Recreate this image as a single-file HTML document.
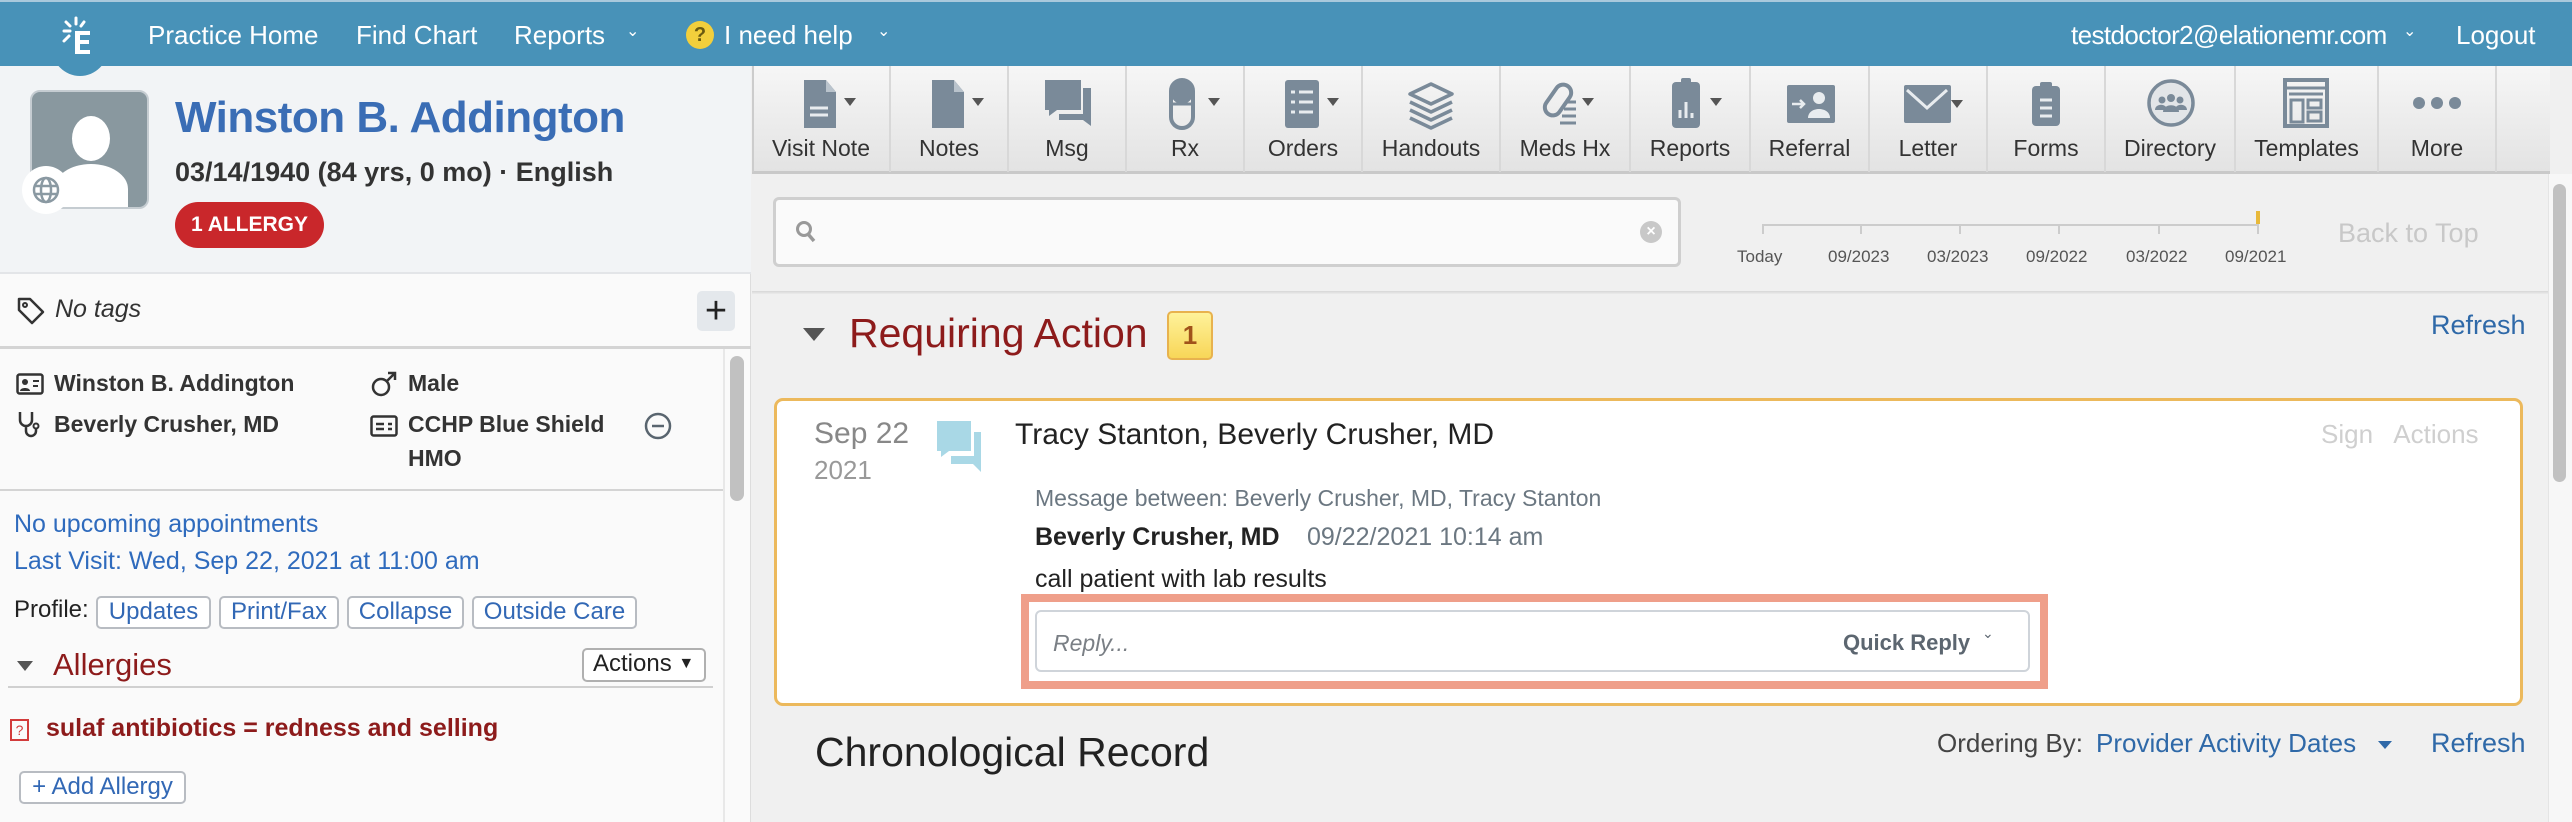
<!DOCTYPE html>
<html><head><meta charset="utf-8"><style>
*{box-sizing:border-box;margin:0;padding:0}
body{width:2572px;height:822px;overflow:hidden;position:relative;background:#f0f0f0;font-family:"Liberation Sans",Arial,sans-serif;color:#333}
.a{position:absolute;white-space:nowrap;line-height:1}
.nav{position:absolute;left:0;top:0;width:2572px;height:66px;background:#4892b8;border-top:2px solid #a9c9dc}
.nav .a{color:#fff;font-size:26px;top:20px}
.left{position:absolute;left:0;top:66px;width:751px;height:756px;background:#fafafa;border-right:1px solid #ddd}
.hdr{position:absolute;left:0;top:66px;width:751px;height:208px;background:#f2f4f6;border-bottom:2px solid #e3e5e8}
.btn{position:absolute;border:2px solid #b8bcc2;border-radius:5px;background:#fff;color:#3268b5;font-size:24px;line-height:28px;text-align:center}
.tb{position:absolute;left:752px;top:66px;width:1798px;height:108px;background:linear-gradient(#f6f6f6,#e3e3e3);border-bottom:3px solid #c9c9c9}
.sep{position:absolute;top:66px;width:2px;height:106px;background:#d8d8d8}
.lbl{position:absolute;top:137px;font-size:23px;color:#333;text-align:center;line-height:1}
.ic{position:absolute;top:78px}
.blue{color:#2f69a8}
</style></head><body>

<div class="nav">
  <div class="a" style="left:148px">Practice Home</div>
  <div class="a" style="left:356px">Find Chart</div>
  <div class="a" style="left:514px">Reports</div>
  <div class="a" style="left:626px;font-size:16px;top:22px">&#8964;</div>
  <div class="a" style="left:686px;top:19px;width:28px;height:28px;border-radius:50%;background:#f2cf3c;color:#6a5a10;font-size:20px;font-weight:bold;text-align:center;line-height:28px">?</div>
  <div class="a" style="left:724px">I need help</div>
  <div class="a" style="left:877px;font-size:16px;top:22px">&#8964;</div>
  <div class="a" style="left:2071px;letter-spacing:-0.6px">testdoctor2@elationemr.com</div>
  <div class="a" style="left:2403px;font-size:16px;top:22px">&#8964;</div>
  <div class="a" style="left:2456px">Logout</div>
</div>

<div class="left"></div>
<div class="hdr"></div>
<!-- logo bump -->
<div style="position:absolute;left:52px;top:30px;width:56px;height:46px;border-radius:0 0 28px 28px;background:#4892b8"></div>
<svg class="a" style="left:60px;top:16px" width="40" height="44" viewBox="0 0 40 44"><g stroke="#fff" stroke-width="3" stroke-linecap="round"><line x1="16" y1="2" x2="16" y2="8"/><line x1="6" y1="6" x2="10" y2="10"/><line x1="24" y1="6" x2="21" y2="10"/><line x1="4" y1="15" x2="10" y2="15"/><line x1="4" y1="25" x2="9" y2="20"/></g><path d="M15 15h15v4H20v5h9v4h-9v6h10v4H15z" fill="#fff"/></svg>

<!-- avatar -->
<div class="a" style="left:30px;top:90px;width:119px;height:119px;border-radius:10px;background:#89989f;border:2px solid #c5ccd1;overflow:hidden">
  <div style="position:absolute;left:40px;top:24px;width:38px;height:45px;border-radius:50%;background:#fff"></div>
  <div style="position:absolute;left:22px;top:72px;width:74px;height:50px;border-radius:50% 50% 0 0;background:#fff"></div>
</div>
<div class="a" style="left:22px;top:166px;width:48px;height:48px;border-radius:50%;background:#fff"></div>
<svg class="a" style="left:32px;top:176px" width="28" height="28" viewBox="0 0 28 28"><g fill="none" stroke="#8a99a2" stroke-width="2.5"><circle cx="14" cy="14" r="12"/><ellipse cx="14" cy="14" rx="5" ry="12"/><line x1="2" y1="10" x2="26" y2="10"/><line x1="2" y1="18" x2="26" y2="18"/></g></svg>

<div class="a" style="left:175px;top:96px;font-size:44px;font-weight:bold;color:#3a6db5;letter-spacing:-0.5px">Winston B. Addington</div>
<div class="a" style="left:175px;top:159px;font-size:27px;font-weight:bold;color:#333">03/14/1940 (84 yrs, 0 mo) · English</div>
<div class="a" style="left:175px;top:202px;width:149px;height:46px;border-radius:23px;background:#c9272b;color:#fff;font-weight:bold;font-size:21px;line-height:46px;text-align:center">1 ALLERGY</div>

<!-- tags -->
<svg class="a" style="left:16px;top:296px" width="30" height="30" viewBox="0 0 30 30"><path d="M3 3h11l13 13-11 11L3 14z" fill="none" stroke="#333" stroke-width="2.5" stroke-linejoin="round"/><circle cx="9" cy="9" r="2" fill="none" stroke="#333" stroke-width="2"/></svg>
<div class="a" style="left:55px;top:297px;font-size:25px;font-style:italic;color:#333">No tags</div>
<div class="a" style="left:697px;top:291px;width:38px;height:40px;border-radius:5px;background:#e4e8ec;text-align:center;font-size:38px;line-height:40px;color:#222">+</div>
<div class="a" style="left:0;top:346px;width:751px;height:3px;background:#d4d4d4"></div>
<div class="a" style="left:723px;top:349px;width:2px;height:473px;background:#e8e8e8"></div>
<div class="a" style="left:730px;top:356px;width:14px;height:145px;border-radius:7px;background:#c1c1c1"></div>

<!-- demographics -->
<svg class="a" style="left:16px;top:373px" width="28" height="22" viewBox="0 0 28 22"><rect x="1.5" y="1.5" width="25" height="19" rx="2" fill="none" stroke="#333" stroke-width="2.5"/><circle cx="9" cy="9" r="3" fill="#333"/><path d="M4 18c0-4 10-4 10 0z" fill="#333"/><path d="M17 8h6M17 13h5" stroke="#333" stroke-width="2"/></svg>
<div class="a" style="left:54px;top:372px;font-size:23px;font-weight:bold;color:#333">Winston B. Addington</div>
<svg class="a" style="left:370px;top:370px" width="28" height="28" viewBox="0 0 28 28"><circle cx="11" cy="17" r="8" fill="none" stroke="#333" stroke-width="2.5"/><path d="M17 11l8-8M18 3h7v7" fill="none" stroke="#333" stroke-width="2.5"/></svg>
<div class="a" style="left:408px;top:372px;font-size:23px;font-weight:bold;color:#333">Male</div>
<svg class="a" style="left:17px;top:410px" width="26" height="30" viewBox="0 0 26 30"><path d="M3 2v8a6 6 0 0 0 12 0V2M9 16v5a5 5 0 0 0 10 0v-3" fill="none" stroke="#333" stroke-width="2.5"/><circle cx="19" cy="16" r="2.5" fill="none" stroke="#333" stroke-width="2"/></svg>
<div class="a" style="left:54px;top:413px;font-size:23px;font-weight:bold;color:#333">Beverly Crusher, MD</div>
<svg class="a" style="left:370px;top:415px" width="28" height="22" viewBox="0 0 28 22"><rect x="1.5" y="1.5" width="25" height="19" rx="2" fill="none" stroke="#333" stroke-width="2.5"/><path d="M6 9h8M6 14h8M18 9h4M18 14h4" stroke="#333" stroke-width="2.5"/></svg>
<div class="a" style="left:408px;top:413px;font-size:23px;font-weight:bold;color:#333">CCHP Blue Shield</div>
<div class="a" style="left:408px;top:447px;font-size:23px;font-weight:bold;color:#333">HMO</div>
<svg class="a" style="left:644px;top:412px" width="28" height="28" viewBox="0 0 28 28"><circle cx="14" cy="14" r="12" fill="none" stroke="#59656f" stroke-width="2.5"/><line x1="8" y1="14" x2="20" y2="14" stroke="#59656f" stroke-width="2.5"/></svg>
<div class="a" style="left:0;top:489px;width:723px;height:2px;background:#d4d4d4"></div>

<div class="a" style="left:14px;top:512px;font-size:25px;color:#2f6bbd">No upcoming appointments</div>
<div class="a" style="left:14px;top:549px;font-size:25px;color:#2f6bbd">Last Visit: Wed, Sep 22, 2021 at 11:00 am</div>
<div class="a" style="left:14px;top:598px;font-size:24px;color:#222">Profile:</div>
<div class="btn" style="left:96px;top:596px;width:115px;height:33px">Updates</div>
<div class="btn" style="left:219px;top:596px;width:120px;height:33px">Print/Fax</div>
<div class="btn" style="left:347px;top:596px;width:117px;height:33px">Collapse</div>
<div class="btn" style="left:472px;top:596px;width:165px;height:33px">Outside Care</div>

<div class="a" style="left:17px;top:661px;width:0;height:0;border-left:8px solid transparent;border-right:8px solid transparent;border-top:10px solid #555"></div>
<div class="a" style="left:53px;top:649px;font-size:31px;color:#8d1b1b">Allergies</div>
<div class="btn" style="left:582px;top:648px;width:124px;height:34px;color:#222;border-color:#b0b0b0;text-align:left;padding-left:9px">Actions <span style="font-size:16px;vertical-align:3px">&#9660;</span></div>
<div class="a" style="left:8px;top:686px;width:705px;height:2px;background:#d0d0d0"></div>
<div class="a" style="left:10px;top:719px;width:19px;height:22px;border:2px solid #d23b3b;color:#d23b3b;font-size:14px;text-align:center;line-height:18px">?</div>
<div class="a" style="left:46px;top:716px;font-size:25px;color:#8d1b1b;font-weight:bold">sulaf antibiotics = redness and selling</div>
<div class="btn" style="left:19px;top:771px;width:167px;height:33px">+ Add Allergy</div>

<!-- toolbar -->
<div class="tb"></div>
<div class="sep" style="left:752px;background:#ccc"></div>
<div class="sep" style="left:889px"></div><div class="sep" style="left:1007px"></div><div class="sep" style="left:1125px"></div><div class="sep" style="left:1243px"></div><div class="sep" style="left:1361px"></div><div class="sep" style="left:1499px"></div><div class="sep" style="left:1629px"></div><div class="sep" style="left:1749px"></div><div class="sep" style="left:1868px"></div><div class="sep" style="left:1986px"></div><div class="sep" style="left:2104px"></div><div class="sep" style="left:2234px"></div><div class="sep" style="left:2377px"></div><div class="sep" style="left:2495px"></div>

<!-- icons -->
<svg class="ic" style="left:800px" width="60" height="52" viewBox="0 0 60 52"><path d="M4 2h22l10 12v36H4z" fill="#7a8a99"/><path d="M26 2v12h10" fill="#b9c3cc"/><path d="M10 30h18M10 37h18" stroke="#e8ecef" stroke-width="3"/><path d="M44 20h12l-6 8z" fill="#555"/></svg>
<div class="lbl" style="left:752px;width:138px">Visit Note</div>
<svg class="ic" style="left:928px" width="60" height="52" viewBox="0 0 60 52"><path d="M4 2h22l10 12v36H4z" fill="#7a8a99"/><path d="M26 2v12h10" fill="#b9c3cc"/><path d="M44 20h12l-6 8z" fill="#555"/></svg>
<div class="lbl" style="left:890px;width:118px">Notes</div>
<svg class="ic" style="left:1043px" width="50" height="52" viewBox="0 0 50 52"><path d="M2 2h36v30H14l-8 6v-6H2z" fill="#7a8a99"/><path d="M40 10h8v38l-8-6H16v-6h24z" fill="#7a8a99"/></svg>
<div class="lbl" style="left:1008px;width:118px">Msg</div>
<svg class="ic" style="left:1168px" width="60" height="52" viewBox="0 0 60 52"><rect x="3" y="2" width="22" height="48" rx="11" fill="none" stroke="#7a8a99" stroke-width="4"/><path d="M3 26h22" stroke="#7a8a99" stroke-width="3"/><rect x="3" y="2" width="22" height="24" rx="11" fill="#7a8a99"/><path d="M40 20h12l-6 8z" fill="#555"/></svg>
<div class="lbl" style="left:1126px;width:118px">Rx</div>
<svg class="ic" style="left:1283px" width="62" height="52" viewBox="0 0 62 52"><rect x="2" y="2" width="34" height="48" rx="3" fill="#7a8a99"/><path d="M8 14h4M16 14h14M8 24h4M16 24h14M8 34h4M16 34h14" stroke="#e8ecef" stroke-width="3"/><path d="M44 20h12l-6 8z" fill="#555"/></svg>
<div class="lbl" style="left:1244px;width:118px">Orders</div>
<svg class="ic" style="left:1406px" width="50" height="52" viewBox="0 0 50 52"><g fill="none" stroke="#7a8a99" stroke-width="3.5" stroke-linejoin="round"><path d="M4 16L25 6l21 10-21 10z"/><path d="M4 24l21 10 21-10"/><path d="M4 32l21 10 21-10"/><path d="M4 40l21 10 21-10"/></g></svg>
<div class="lbl" style="left:1362px;width:138px">Handouts</div>
<svg class="ic" style="left:1538px" width="64" height="52" viewBox="0 0 64 52"><rect x="3" y="14" width="34" height="16" rx="8" transform="rotate(-55 20 22)" fill="none" stroke="#7a8a99" stroke-width="4"/><path d="M28 24h10M26 31h12M24 38h14M22 45h16" stroke="#7a8a99" stroke-width="3"/><path d="M44 20h12l-6 8z" fill="#555"/></svg>
<div class="lbl" style="left:1500px;width:130px">Meds Hx</div>
<svg class="ic" style="left:1670px" width="60" height="52" viewBox="0 0 60 52"><rect x="2" y="4" width="28" height="46" rx="4" fill="#7a8a99"/><rect x="11" y="0" width="10" height="8" rx="2" fill="#7a8a99"/><path d="M10 40v-8M16 40v-16M22 40v-5" stroke="#e8ecef" stroke-width="3"/><path d="M40 20h12l-6 8z" fill="#555"/></svg>
<div class="lbl" style="left:1630px;width:120px">Reports</div>
<svg class="ic" style="left:1786px;top:84px" width="50" height="44" viewBox="0 0 50 44"><rect x="1" y="1" width="48" height="38" rx="2" fill="#7a8a99"/><circle cx="33" cy="14" r="6" fill="#e8ecef"/><path d="M22 34c0-12 22-12 22 0z" fill="#e8ecef"/><path d="M6 20h12M14 16l4 4-4 4" fill="none" stroke="#e8ecef" stroke-width="2.5"/></svg>
<div class="lbl" style="left:1750px;width:119px">Referral</div>
<svg class="ic" style="left:1903px;top:84px" width="62" height="44" viewBox="0 0 62 44"><rect x="1" y="1" width="47" height="38" rx="2" fill="#7a8a99"/><path d="M4 6l20 18 20-18" fill="none" stroke="#e8ecef" stroke-width="3"/><path d="M48 16h12l-6 8z" fill="#555"/></svg>
<div class="lbl" style="left:1869px;width:118px">Letter</div>
<svg class="ic" style="left:2031px;top:82px" width="30" height="46" viewBox="0 0 30 46"><rect x="1" y="4" width="28" height="40" rx="4" fill="#7a8a99"/><rect x="9" y="0" width="12" height="8" rx="2" fill="#7a8a99"/><path d="M9 18h12M9 26h12M9 34h12" stroke="#e8ecef" stroke-width="3"/></svg>
<div class="lbl" style="left:1987px;width:118px">Forms</div>
<svg class="ic" style="left:2146px" width="50" height="50" viewBox="0 0 50 50"><circle cx="25" cy="25" r="22" fill="#e2e5e8" stroke="#7a8a99" stroke-width="3.5"/><circle cx="25" cy="20" r="4" fill="#7a8a99"/><circle cx="16" cy="22" r="3.5" fill="#7a8a99"/><circle cx="34" cy="22" r="3.5" fill="#7a8a99"/><path d="M17 34c0-9 16-9 16 0zM9 32c0-7 12-7 12 0zM29 32c0-7 12-7 12 0z" fill="#7a8a99"/></svg>
<div class="lbl" style="left:2105px;width:130px">Directory</div>
<svg class="ic" style="left:2283px" width="46" height="50" viewBox="0 0 46 50"><rect x="2" y="2" width="42" height="46" fill="none" stroke="#7a8a99" stroke-width="4"/><path d="M2 10h42M6 16h34" stroke="#7a8a99" stroke-width="3"/><rect x="8" y="22" width="12" height="22" fill="none" stroke="#7a8a99" stroke-width="3"/><rect x="25" y="22" width="13" height="8" fill="none" stroke="#7a8a99" stroke-width="3"/><rect x="25" y="34" width="13" height="9" fill="none" stroke="#7a8a99" stroke-width="3"/></svg>
<div class="lbl" style="left:2235px;width:143px">Templates</div>
<svg class="ic" style="left:2412px;top:96px" width="50" height="14" viewBox="0 0 50 14"><circle cx="7" cy="7" r="6" fill="#7a8a99"/><circle cx="25" cy="7" r="6" fill="#7a8a99"/><circle cx="43" cy="7" r="6" fill="#7a8a99"/></svg>
<div class="lbl" style="left:2378px;width:118px">More</div>

<!-- search row -->
<div class="a" style="left:773px;top:197px;width:908px;height:70px;border:3px solid #cfcfcf;border-radius:6px;background:#fafafa"></div>
<svg class="a" style="left:795px;top:220px" width="22" height="24" viewBox="0 0 22 24"><circle cx="9" cy="9" r="6.5" fill="none" stroke="#999" stroke-width="3"/><line x1="13" y1="14" x2="19" y2="21" stroke="#999" stroke-width="3.5"/></svg>
<div class="a" style="left:1640px;top:221px;width:22px;height:22px;border-radius:50%;background:#c8c8c8;color:#fff;font-size:16px;text-align:center;line-height:22px;font-weight:bold">×</div>
<div class="a" style="left:1762px;top:224px;width:497px;height:2px;background:#ccc"></div>
<div class="a" style="left:1762px;top:224px;width:2px;height:10px;background:#ccc"></div>
<div class="a" style="left:1860px;top:224px;width:2px;height:10px;background:#ccc"></div>
<div class="a" style="left:1959px;top:224px;width:2px;height:10px;background:#ccc"></div>
<div class="a" style="left:2058px;top:224px;width:2px;height:10px;background:#ccc"></div>
<div class="a" style="left:2158px;top:224px;width:2px;height:10px;background:#ccc"></div>
<div class="a" style="left:2257px;top:224px;width:2px;height:10px;background:#ccc"></div>
<div class="a" style="left:2256px;top:211px;width:4px;height:13px;background:#e8b93a"></div>
<div class="a" style="left:1737px;top:248px;font-size:17px;color:#555">Today</div>
<div class="a" style="left:1828px;top:248px;font-size:17px;color:#555">09/2023</div>
<div class="a" style="left:1927px;top:248px;font-size:17px;color:#555">03/2023</div>
<div class="a" style="left:2026px;top:248px;font-size:17px;color:#555">09/2022</div>
<div class="a" style="left:2126px;top:248px;font-size:17px;color:#555">03/2022</div>
<div class="a" style="left:2225px;top:248px;font-size:17px;color:#555">09/2021</div>
<div class="a" style="left:2338px;top:220px;font-size:27px;color:#c8c8c8">Back to Top</div>
<div class="a" style="left:752px;top:291px;width:1798px;height:3px;background:linear-gradient(#d6d6d6,#ececec)"></div>

<!-- right scrollbar -->
<div class="a" style="left:2548px;top:174px;width:24px;height:648px;background:#f7f7f7;border-left:1px solid #e4e4e4"></div>
<div class="a" style="left:2553px;top:184px;width:13px;height:298px;border-radius:7px;background:#c1c1c1"></div>

<!-- Requiring Action -->
<div class="a" style="left:803px;top:328px;width:0;height:0;border-left:11px solid transparent;border-right:11px solid transparent;border-top:13px solid #555"></div>
<div class="a" style="left:849px;top:313px;font-size:41px;color:#8d1b1b">Requiring Action</div>
<div class="a" style="left:1167px;top:311px;width:46px;height:49px;border:2px solid #e8b24e;border-radius:5px;background:linear-gradient(#fef29a,#f8d658);color:#a0521a;font-size:26px;font-weight:bold;text-align:center;line-height:45px">1</div>
<div class="a blue" style="left:2431px;top:312px;font-size:27px">Refresh</div>

<div class="a" style="left:774px;top:398px;width:1749px;height:308px;border:3px solid #ecb95c;border-radius:9px;background:#fff"></div>
<div class="a" style="left:814px;top:419px;font-size:30px;color:#888">Sep 22</div>
<div class="a" style="left:814px;top:457px;font-size:26px;color:#999">2021</div>
<svg class="a" style="left:936px;top:420px" width="54" height="54" viewBox="0 0 54 54"><path d="M1 1h34v30H13l-8 6v-6H1z" fill="#a9d8e6"/><path d="M38 12h7v40l-8-8H15v-8h23z" fill="#a9d8e6"/></svg>
<div class="a" style="left:1015px;top:420px;font-size:30px;color:#222">Tracy Stanton, Beverly Crusher, MD</div>
<div class="a" style="left:2321px;top:421px;font-size:26px;color:#cfcfcf">Sign&nbsp;&nbsp; Actions</div>
<div class="a" style="left:1035px;top:487px;font-size:23px;color:#6b7781">Message between: Beverly Crusher, MD, Tracy Stanton</div>
<div class="a" style="left:1035px;top:525px;font-size:25px;color:#222;font-weight:bold">Beverly Crusher, MD</div>
<div class="a" style="left:1307px;top:525px;font-size:25px;color:#6b7781">09/22/2021 10:14 am</div>
<div class="a" style="left:1035px;top:567px;font-size:25px;color:#222">call patient with lab results</div>
<div class="a" style="left:1021px;top:594px;width:1027px;height:95px;border:8px solid #ef9f8a"></div>
<div class="a" style="left:1035px;top:610px;width:995px;height:62px;border:2px solid #cfd4da;border-radius:6px;background:#fff"></div>
<div class="a" style="left:1053px;top:632px;font-size:23px;font-style:italic;color:#7a7f85">Reply...</div>
<div class="a" style="left:1843px;top:632px;font-size:22px;font-weight:bold;color:#5c6670">Quick Reply</div>
<div class="a" style="left:1982px;top:626px;font-size:14px;color:#5c6670">&#8964;</div>

<div class="a" style="left:815px;top:732px;font-size:41px;color:#222">Chronological Record</div>
<div class="a" style="left:1937px;top:730px;font-size:26px;color:#444">Ordering By:</div>
<div class="a blue" style="left:2096px;top:730px;font-size:26px">Provider Activity Dates</div>
<div class="a" style="left:2378px;top:741px;width:0;height:0;border-left:7px solid transparent;border-right:7px solid transparent;border-top:8px solid #2f69a8"></div>
<div class="a blue" style="left:2431px;top:730px;font-size:27px">Refresh</div>
</body></html>
